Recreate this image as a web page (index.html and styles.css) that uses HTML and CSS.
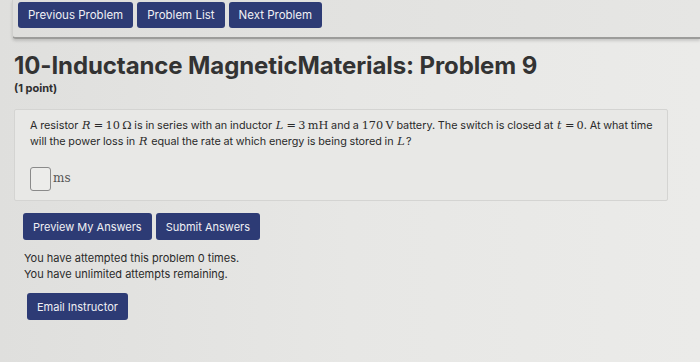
FILE: index.html
```html
<!DOCTYPE html>
<html>
<head>
<meta charset="utf-8">
<link rel="stylesheet" href="styles.css">
</head>
<body>
<div class="topbar">
  <nav class="nav">
    <a class="btn nav-btn">Previous Problem</a>
    <a class="btn nav-btn">Problem List</a>
    <a class="btn nav-btn">Next Problem</a>
  </nav>
</div>
<main class="content">
  <h1 class="title">10-Inductance MagneticMaterials: Problem 9</h1>
  <div class="points">(1 point)</div>
  <section class="problem">
    <p class="text"><span class="line">A resistor <span class="mi">R</span><span class="m">&thinsp;=&thinsp;10&thinsp;Ω</span> is in series with an inductor <span class="mi">L</span><span class="m">&thinsp;=&thinsp;3&thinsp;mH</span> and a <span class="m">170&thinsp;V</span> battery. The switch is closed at <span class="mi">t</span><span class="m">&thinsp;=&thinsp;0</span>. At what time</span><br><span class="line">will the power loss in <span class="mi">R</span> equal the rate at which energy is being stored in <span class="mi">L</span>?</span></p>
    <div class="answer"><span class="input"></span><span class="unit">ms</span></div>
  </section>
  <div class="actions">
    <a class="btn act-btn">Preview My Answers</a>
    <a class="btn act-btn">Submit Answers</a>
  </div>
  <p class="info">You have attempted this problem 0 times.<br>You have unlimited attempts remaining.</p>
  <a class="btn email-btn">Email Instructor</a>
</main>
</body>
</html>
```
FILE: styles.css
```css
html, body {
  margin: 0;
  padding: 0;
}
body {
  width: 700px;
  height: 362px;
  overflow: hidden;
  background: linear-gradient(90deg, #dfdfdd 0%, #e7e7e5 50%, #ebebe9 100%);
  font-family: Inter, "Liberation Sans", sans-serif;
  color: #2e2e2e;
}
.topbar {
  height: 37px;
  margin-left: 12px;
  background: linear-gradient(90deg, #dededc 0%, #e6e6e4 100%);
  border-bottom: 2px solid #9c9c9a;
  border-left: 1px solid #cfcfcd;
  border-bottom-left-radius: 4px;
  box-shadow: 0 2px 3px rgba(0,0,0,0.15);
}
.nav {
  display: flex;
  gap: 4px;
  padding-left: 5px;
  padding-top: 2px;
}
.btn {
  display: inline-flex;
  align-items: center;
  justify-content: center;
  background: #2d3b75;
  color: #f0f0f4;
  border-radius: 3px;
  font-size: 11.5px;
  white-space: nowrap;
}
.nav-btn {
  height: 26px;
  padding: 0 10px;
}
.content {
  padding: 12px 14px 0 14px;
}
.title {
  margin: 0;
  font-size: 24px;
  font-weight: 700;
  line-height: 30px;
  color: #333;
  letter-spacing: -0.1px;
}
.points {
  font-size: 11px;
  font-weight: 700;
  margin-top: 0;
  line-height: 14px;
}
.problem {
  margin-top: 14px;
  width: 624px;
  height: 74px;
  padding: 8px 13px 8px 15px;
  border: 1px solid #d4d4d2;
  background: #e8e8e6;
  border-radius: 2px;
}
.text {
  margin: 0;
  font-size: 10.8px;
  line-height: 16px;
  word-spacing: -0.3px;
  color: #2a2a2a;
}
.line {
  white-space: nowrap;
}
.m, .mi {
  font-family: "DejaVu Serif", "Liberation Serif", serif;
  font-size: 11.3px;
  line-height: 12px;
}
.mi {
  font-style: italic;
  padding: 0 1px;
}
.answer {
  display: flex;
  align-items: flex-start;
  margin-top: 17px;
}
.input {
  width: 19px;
  height: 22px;
  border: 1px solid #8a8a8a;
  border-radius: 3px;
  background: #ececea;
}
.unit {
  font-family: "DejaVu Serif", "Liberation Serif", serif;
  font-size: 12px;
  color: #555;
  margin-top: 4px;
  margin-left: 2px;
}
.actions {
  display: flex;
  gap: 4px;
  margin-top: 12px;
  margin-left: 9px;
}
.act-btn {
  height: 27px;
  padding: 0 10px;
  font-size: 11px;
}
.info {
  margin: 10px 0 0 10px;
  font-size: 11px;
  line-height: 16px;
  color: #2a2a2a;
}
.email-btn {
  margin: 11px 0 0 13px;
  height: 27px;
  padding: 0 10px;
  font-size: 11px;
}
```
